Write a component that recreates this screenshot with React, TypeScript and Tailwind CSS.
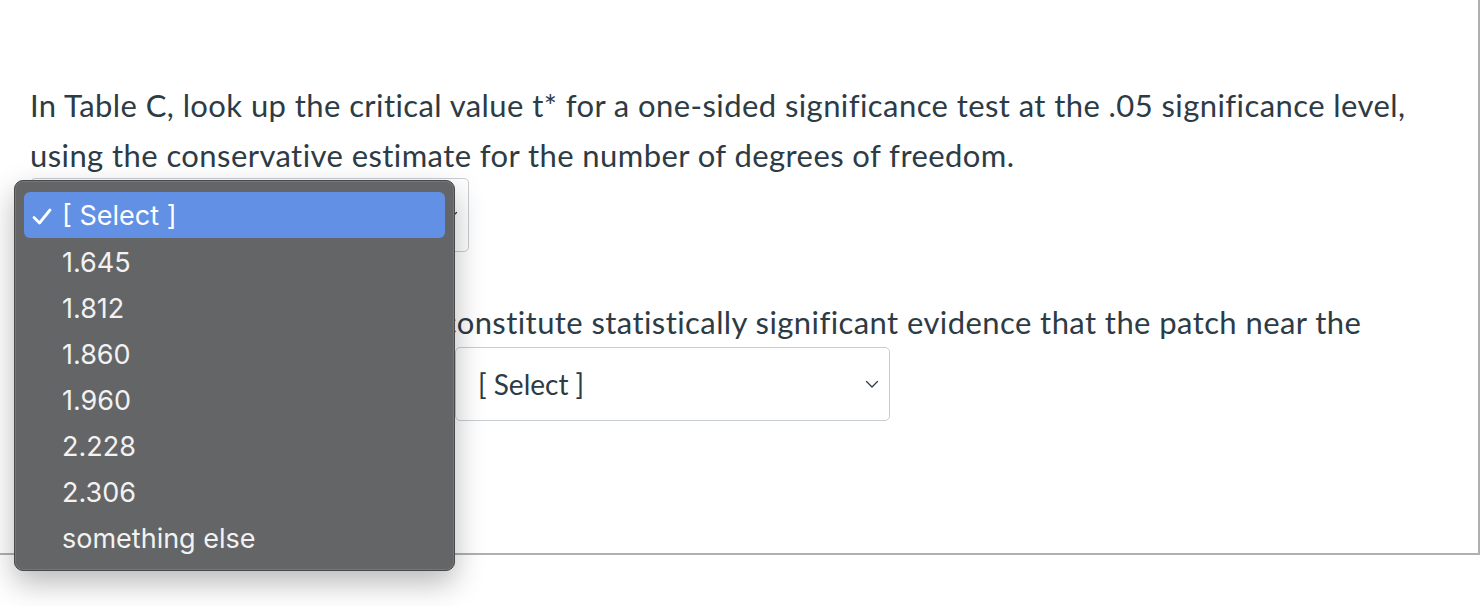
import React from "react";

const options = ["1.645", "1.812", "1.860", "1.960", "2.228", "2.306", "something else"];

const Chevron = () => (
    <svg width="14" height="9" viewBox="0 0 14 9" fill="none" stroke="#2d3b45" strokeWidth="1.3" strokeLinecap="round" strokeLinejoin="round">
        <path d="M1.5 1.5 L7 7 L12.5 1.5" />
    </svg>
);

const SelectBox = ({ width }: { width: string }) => (
    <div className={`flex items-center justify-between h-[74px] ${width} pl-[22px] pr-[10px] border border-[#c7cdd1] rounded-[5px] bg-white shrink-0 text-[28px] tracking-normal`}>
        <span>[ Select ]</span>
        <Chevron />
    </div>
);

export default function App() {
    return (
        <div className="relative w-[1480px] h-[606px] bg-white overflow-hidden" style={{ fontFamily: "Lato, 'Open Sans', sans-serif" }}>
            <div className="h-[555px] border-r-2 border-b-2 border-[#b0b0b0] pt-[80px] pl-[30px] pr-[30px] text-[31px] tracking-[0.42px] leading-[50px] text-[#2d3b45]">
                <p>
                    In Table C, look up the critical value t* for a one-sided significance test at the .05 significance level,
                    using the conservative estimate for the number of degrees of freedom.
                </p>
                <div className="mt-[-2px]">
                    <SelectBox width="w-[439px]" />
                </div>
                <p className="mt-[45px]">
                    Do the results of your t-tests constitute statistically significant evidence that the patch near the
                </p>
                <div className="flex items-center">
                    <span className="w-[425px]">outfall has higher counts?</span>
                    <SelectBox width="w-[435px]" />
                </div>
            </div>

            <div
                className="absolute left-[14px] top-[180px] w-[441px] h-[391px] rounded-[9px] bg-[#646567] border border-[#48484a] shadow-[0_12px_30px_rgba(0,0,0,0.28),inset_0_0_0_1px_rgba(255,255,255,0.12)] pt-[11px] px-[9px] text-[#f2f2f2] text-[27px]"
                style={{ fontFamily: "Inter, 'Liberation Sans', sans-serif" }}
            >
                <div className="flex items-center h-[46px] pt-[2px] rounded-[6px] bg-[#6290e4] text-white">
                    <svg className="ml-[8px] mr-[10px]" width="20" height="17" viewBox="0 0 20 17" fill="none" stroke="#ffffff" strokeWidth="2.8" strokeLinecap="round" strokeLinejoin="round">
                        <path d="M2 9.5 L7.5 15 L18 2" />
                    </svg>
                    <span>[ Select ]</span>
                </div>
                {options.map(o => (
                    <div key={o} className="flex items-center h-[46px] pt-[4px] pl-[38px]">
                        {o}
                    </div>
                ))}
            </div>
        </div>
    );
}
